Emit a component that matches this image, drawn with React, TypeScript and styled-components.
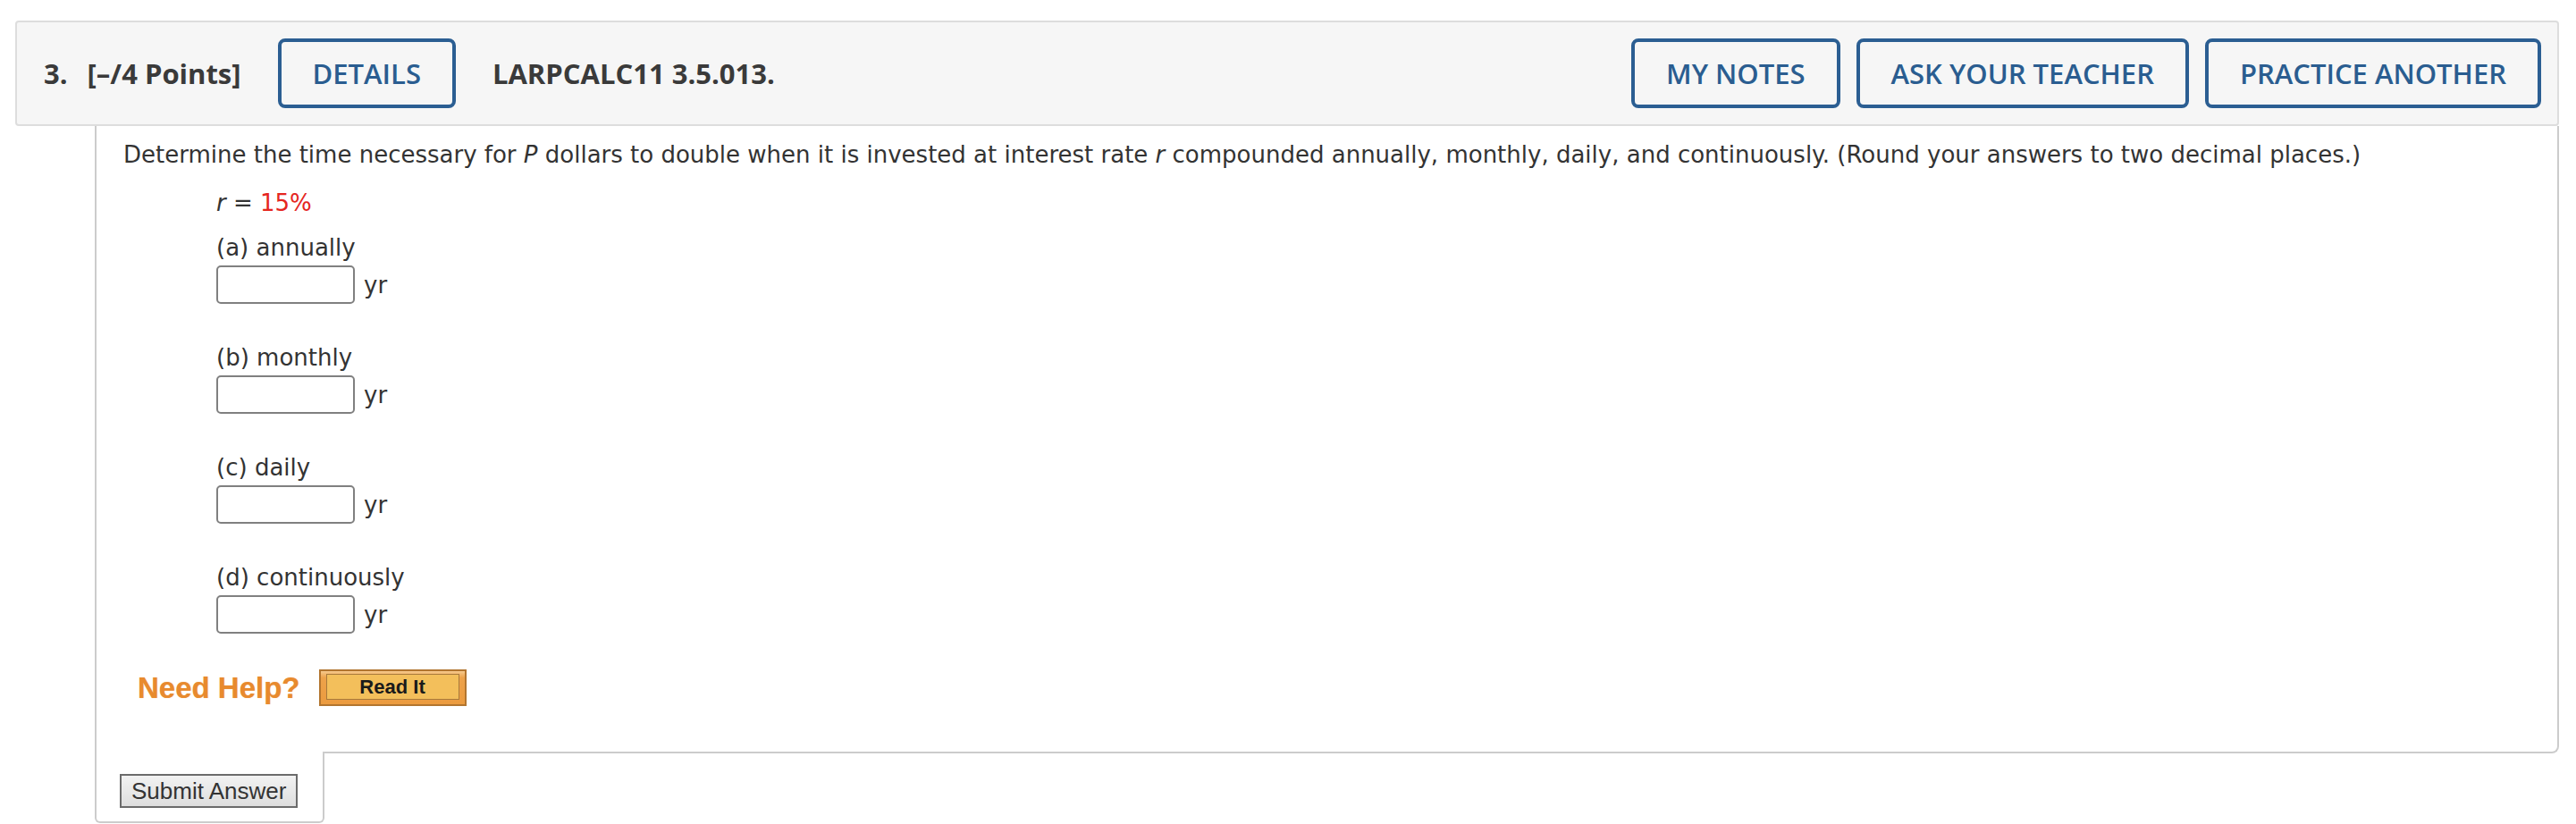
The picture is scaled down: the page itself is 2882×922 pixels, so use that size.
import styled, { createGlobalStyle } from 'styled-components';

const GlobalStyle = createGlobalStyle`
  * {
    box-sizing: border-box;
  }
  body {
    margin: 0;
    background: #ffffff;
    font-family: "DejaVu Sans", Verdana, sans-serif;
  }
`;

const parts = [
  { key: 'a', label: 'annually' },
  { key: 'b', label: 'monthly' },
  { key: 'c', label: 'daily' },
  { key: 'd', label: 'continuously' },
];

const App = () => {
  return (
    <>
      <GlobalStyle />
      <Page>
        <QuestionHeader>
          <HeaderLeft>
            <QuestionTitle>
              3.<Points>[–/4 Points]</Points>
            </QuestionTitle>
            <OutlineButton>DETAILS</OutlineButton>
            <QuestionTitle>LARPCALC11 3.5.013.</QuestionTitle>
          </HeaderLeft>
          <HeaderActions>
            <OutlineButton>MY NOTES</OutlineButton>
            <OutlineButton>ASK YOUR TEACHER</OutlineButton>
            <OutlineButton>PRACTICE ANOTHER</OutlineButton>
          </HeaderActions>
        </QuestionHeader>

        <QuestionBody>
          <Panel>
            <Prompt>
              Determine the time necessary for <i>P</i> dollars to double when it is invested at interest rate{' '}
              <i>r</i> compounded annually, monthly, daily, and continuously. (Round your answers to two decimal
              places.)
            </Prompt>
            <Given>
              <i>r</i> = <Red>15%</Red>
            </Given>
            <PartList>
              {parts.map((part) => (
                <Part key={part.key}>
                  <PartLabel>
                    ({part.key}) {part.label}
                  </PartLabel>
                  <AnswerRow>
                    <AnswerInput type="text" />
                    <Unit>yr</Unit>
                  </AnswerRow>
                </Part>
              ))}
            </PartList>
            <HelpRow>
              <NeedHelp>Need Help?</NeedHelp>
              <ReadItButton>
                <ReadItInner>Read It</ReadItInner>
              </ReadItButton>
            </HelpRow>
          </Panel>
          <SubmitTab>
            <SubmitButton>Submit Answer</SubmitButton>
          </SubmitTab>
        </QuestionBody>
      </Page>
    </>
  );
};

const Page = styled.div`
  padding: 23px 19px 0 17px;
`;

const QuestionHeader = styled.div`
  display: flex;
  align-items: center;
  justify-content: space-between;
  padding: 18px 18px 18px 30px;
  border: 2px solid #dddddd;
  border-radius: 4px;
  background-color: #f6f6f6;
`;

const HeaderLeft = styled.div`
  display: flex;
  align-items: center;
  gap: 41px;
`;

const HeaderActions = styled.div`
  display: flex;
  align-items: center;
  gap: 18px;
`;

const QuestionTitle = styled.div`
  font-family: "Open Sans", sans-serif;
  font-size: 31px;
  font-weight: 700;
  color: #3a3a3a;
  white-space: nowrap;
`;

const Points = styled.span`
  margin-left: 22px;
`;

const OutlineButton = styled.button`
  height: 78px;
  padding: 0 35px;
  border: 4px solid #2b5e92;
  border-radius: 8px;
  background-color: transparent;
  font-family: "Open Sans", sans-serif;
  font-size: 31px;
  font-weight: 600;
  color: #2a5d90;
  white-space: nowrap;
  cursor: pointer;
`;

const QuestionBody = styled.div`
  margin-left: 89px;
`;

const Panel = styled.div`
  padding: 14px 30px 51px 30px;
  border: 2px solid #cccccc;
  border-top: none;
  border-bottom-right-radius: 8px;
  background-color: #ffffff;
  font-size: 26px;
  line-height: 36px;
  color: #333333;
`;

const Prompt = styled.p`
  margin: 0;
`;

const Given = styled.div`
  margin-top: 18px;
  padding-left: 104px;
`;

const Red = styled.span`
  color: #e5261f;
`;

const PartList = styled.div`
  display: flex;
  flex-direction: column;
  gap: 42px;
  margin-top: 14px;
  padding-left: 104px;
`;

const Part = styled.div`
  display: flex;
  flex-direction: column;
  gap: 2px;
`;

const PartLabel = styled.div``;

const AnswerRow = styled.div`
  display: flex;
  align-items: center;
  gap: 10px;
`;

const AnswerInput = styled.input`
  width: 155px;
  height: 43px;
  border: 2px solid #808080;
  border-radius: 5px;
  background-color: #ffffff;
`;

const Unit = styled.span``;

const HelpRow = styled.div`
  display: flex;
  align-items: center;
  gap: 21px;
  margin-top: 40px;
  padding-left: 16px;
`;

const NeedHelp = styled.span`
  font-family: "Liberation Sans", Arial, sans-serif;
  font-size: 33px;
  font-weight: 700;
  line-height: 41px;
  color: #e88a2e;
  text-shadow: 0 0 1px rgba(232, 138, 46, 0.6);
`;

const ReadItButton = styled.div`
  display: flex;
  width: 165px;
  height: 41px;
  padding: 3px 6px 5px 6px;
  border: 2px solid #b2752f;
  background: linear-gradient(#f6c98c 0%, #eda24a 20%, #eb9b3f 100%);
`;

const ReadItInner = styled.div`
  display: flex;
  flex: 1;
  align-items: center;
  justify-content: center;
  border: 1.5px solid #a87a3c;
  background-color: #f3bf5b;
  font-family: "Liberation Sans", Arial, sans-serif;
  font-size: 22px;
  font-weight: 700;
  color: #1a1a1a;
`;

const SubmitTab = styled.div`
  width: 257px;
  margin-top: -2px;
  padding: 25px 0 15px 26px;
  border: 2px solid #cccccc;
  border-top: none;
  border-bottom-left-radius: 6px;
  border-bottom-right-radius: 6px;
  background-color: #ffffff;
`;

const SubmitButton = styled.button`
  display: block;
  height: 38px;
  padding: 0 11px;
  border: 2px solid #6b6b6b;
  border-radius: 0;
  background: linear-gradient(#f2f2f2, #dedede);
  font-family: "Liberation Sans", Arial, sans-serif;
  font-size: 26px;
  line-height: 32px;
  color: #333333;
  cursor: pointer;
`;

export default App;
